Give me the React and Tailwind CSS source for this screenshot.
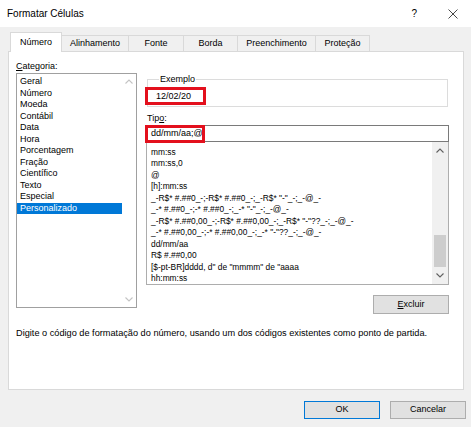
import React from "react";

const categories = [
  "Geral",
  "Número",
  "Moeda",
  "Contábil",
  "Data",
  "Hora",
  "Porcentagem",
  "Fração",
  "Científico",
  "Texto",
  "Especial",
  "Personalizado",
];

const formats = [
  "mm:ss",
  "mm:ss,0",
  "@",
  "[h]:mm:ss",
  '_-R$* #.##0_-;-R$* #.##0_-;_-R$* "-"_-;_-@_-',
  '_-* #.##0_-;-* #.##0_-;_-* "-"_-;_-@_-',
  '_-R$* #.##0,00_-;-R$* #.##0,00_-;_-R$* "-"??_-;_-@_-',
  '_-* #.##0,00_-;-* #.##0,00_-;_-* "-"??_-;_-@_-',
  "dd/mm/aa",
  "R$ #.##0,00",
  '[$-pt-BR]dddd, d" de "mmmm" de "aaaa',
  "hh:mm:ss",
];

const tabs = [
  { id: "numero", title: "Número", w: "w-[52px]" },
  { id: "alinhamento", title: "Alinhamento", w: "w-[67px]" },
  { id: "fonte", title: "Fonte", w: "w-[55px]" },
  { id: "borda", title: "Borda", w: "w-[54px]" },
  { id: "preenchimento", title: "Preenchimento", w: "w-[78px]" },
  { id: "protecao", title: "Proteção", w: "w-[54px]" },
];

const Chevron = ({ up, color }) => (
  <svg width="8" height="5" viewBox="0 0 8 5">
    <polyline
      points={up ? "0.5,4.5 4,1 7.5,4.5" : "0.5,0.5 4,4 7.5,0.5"}
      fill="none"
      stroke={color}
      strokeWidth="1.1"
    />
  </svg>
);

export default function App() {
  return (
    <div className="w-[474px] h-[427px] bg-white flex font-['Liberation_Sans',Arial,sans-serif] text-[9px] text-black overflow-hidden">
      <div className="w-[471px] flex flex-col">
        {/* title bar */}
        <div className="h-[27px] bg-white flex items-center pl-[7px]">
          <span className="text-[10px]">Formatar Células</span>
          <span className="ml-auto mr-[31px] text-[10px]">?</span>
          <svg className="mr-[13px]" width="10" height="10" viewBox="0 0 10 10">
            <line x1="0.5" y1="0.5" x2="9.5" y2="9.5" stroke="#333" strokeWidth="0.9" />
            <line x1="9.5" y1="0.5" x2="0.5" y2="9.5" stroke="#333" strokeWidth="0.9" />
          </svg>
        </div>

        <div className="flex-1 bg-[#f0f0f0] flex flex-col pl-[8px] pt-[5px]">
          {/* tabs */}
          <div className="flex items-end ml-[2px] h-[20px] relative z-10 -mb-px">
            {tabs.map((tab, i) =>
              i === 0 ? (
                <div
                  key={tab.id}
                  className={`${tab.w} h-[20px] bg-white border border-b-0 border-[#d9d9d9] flex items-center justify-center`}
                >
                  {tab.title}
                </div>
              ) : (
                <div
                  key={tab.id}
                  className={`${tab.w} h-[17px] bg-[#f0f0f0] border border-l-0 border-[#d9d9d9] flex items-center justify-center`}
                >
                  {tab.title}
                </div>
              )
            )}
          </div>

          {/* panel */}
          <div className="w-[456px] h-[339px] bg-white border border-[#d9d9d9] flex flex-col">
            <div className="flex">
              {/* left column */}
              <div className="ml-[7px] mt-[8px] flex flex-col">
                <div className="leading-[12px]">
                  <span className="underline">C</span>ategoria:
                </div>
                <div className="mt-[1px] w-[121px] h-[235px] border border-[#a0a0a0] flex">
                  <div className="flex-1 pt-[2px]">
                    {categories.map((c) =>
                      c === "Personalizado" ? (
                        <div
                          key={c}
                          className="leading-[11.5px] pl-[3px] bg-[#0078d7] text-white"
                        >
                          {c}
                        </div>
                      ) : (
                        <div key={c} className="leading-[11.5px] pl-[3px]">
                          {c}
                        </div>
                      )
                    )}
                  </div>
                  <div className="w-[14px] flex flex-col items-center justify-between py-[5px]">
                    <Chevron up color="#c4c4c4" />
                    <Chevron color="#c4c4c4" />
                  </div>
                </div>
              </div>

              {/* right column */}
              <div className="ml-[9px] mt-[21px] w-[303px] flex flex-col relative">
                <fieldset className="ml-[1px] w-[301px] h-[34px] border border-[#dcdcdc] pl-[8px]">
                  <legend className="ml-[3px] px-[1px] leading-[12px]">Exemplo</legend>
                  <div className="leading-[12px] mt-[5px]">12/02/20</div>
                </fieldset>

                <div className="leading-[12px] mt-[5px] ml-[1px]">
                  Tip<span className="underline">o</span>:
                </div>
                <div className="mt-[1px] h-[17px] border border-[#7a7a7a] pl-[4px] flex items-center">
                  dd/mm/aa;@
                </div>
                <div className="h-[143px] border border-t-0 border-[#adadad] flex">
                  <div className="flex-1 pt-[5px] pl-[4px] text-[8.4px]">
                    {formats.map((f) => (
                      <div key={f} className="leading-[11.45px] whitespace-pre">
                        {f}
                      </div>
                    ))}
                  </div>
                  <div className="w-[16px] bg-[#f0f0f0] flex flex-col items-center py-[6px]">
                    <Chevron up color="#606060" />
                    <div className="flex-1" />
                    <div className="w-[12px] h-[32px] bg-[#cdcdcd] mb-[6px]" />
                    <Chevron color="#606060" />
                  </div>
                </div>

                <button className="ml-auto mt-[10px] w-[76px] h-[19px] bg-[#e1e1e1] border border-[#adadad] flex items-center justify-center">
                  <span className="underline">E</span>xcluir
                </button>

                {/* annotation boxes */}
                <div className="absolute left-[-1px] top-[14px] w-[61px] h-[18px] border-[3px] border-[#e3101d]" />
                <div className="absolute left-[-1px] top-[52px] w-[60px] h-[18px] border-[3px] border-[#e3101d]" />
              </div>
            </div>

            <div className="ml-[7px] mt-[13px] leading-[12px] text-[9.2px]">
              Digite o código de formatação do número, usando um dos códigos existentes como ponto de partida.
            </div>
          </div>

          {/* bottom buttons */}
          <div className="flex mt-[11px] ml-[296px] gap-[10px]">
            <button className="w-[76px] h-[18px] bg-[#e1e1e1] border border-[#0078d7] flex items-center justify-center">
              OK
            </button>
            <button className="w-[76px] h-[18px] bg-[#e1e1e1] border border-[#adadad] flex items-center justify-center">
              Cancelar
            </button>
          </div>
        </div>
      </div>
    </div>
  );
}
